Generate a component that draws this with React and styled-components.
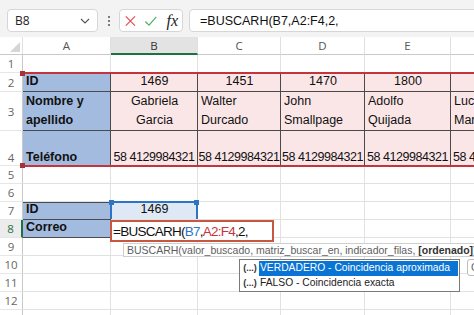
import React from 'react';
import styled, { createGlobalStyle } from 'styled-components';

const GlobalStyle = createGlobalStyle`
  html, body { margin: 0; padding: 0; background: #fff; }
  body { font-family: "Liberation Sans", Arial, sans-serif; }
  * { box-sizing: border-box; }
`;

const Screen = styled.div`
  width: 474px;
  height: 315px;
  overflow: hidden;
  background: #fff;
  display: flex;
  flex-direction: column;
`;

const FormulaBar = styled.div`
  height: 37px;
  flex: none;
  background: #f3f3f3;
  display: flex;
  align-items: flex-start;
  padding: 9px 0 0 7px;
`;

const NameBox = styled.div`
  width: 91px;
  height: 23px;
  background: #fff;
  border: 1px solid #d6d6d6;
  border-radius: 4px;
  display: flex;
  align-items: center;
  justify-content: space-between;
  padding: 0 7px 0 7px;
  font-family: "Open Sans", sans-serif;
  font-size: 12px;
  color: #222;
`;

const Dots = styled.div`
  width: 21px;
  height: 23px;
  display: flex;
  flex-direction: column;
  align-items: center;
  justify-content: center;
  gap: 2px;
  span {
    width: 2px;
    height: 2px;
    background: #555;
    border-radius: 1px;
  }
`;

const IconBox = styled.div`
  width: 64px;
  height: 23px;
  background: #fff;
  border: 1px solid #d6d6d6;
  border-radius: 4px;
  display: flex;
  align-items: center;
  gap: 7px;
  padding: 0 4px 0 4px;
`;

const Fx = styled.span`
  font-family: "Liberation Serif", serif;
  font-style: italic;
  font-size: 16px;
  color: #222;
  margin-left: 2px;
`;

const FormulaInput = styled.div`
  flex: 1;
  height: 23px;
  margin-left: 6px;
  margin-right: -8px;
  background: #fff;
  border: 1px solid #d6d6d6;
  border-radius: 4px;
  display: flex;
  align-items: center;
  padding-left: 10px;
  font-family: "Liberation Sans", sans-serif;
  font-size: 12.5px;
  color: #111;
`;

const Sheet = styled.div`
  display: grid;
  grid-template-columns: 23px 88px 87px 83px 84px 86px 86px 60px;
  grid-template-rows: 18px 18px 19px 39px 35px repeat(9, 18px);
  flex: none;
`;

const Corner = styled.div`
  background: #fff;
  border-right: 1px solid #e0e0e0;
  border-bottom: 1px solid #c9c9c9;
  position: relative;
  svg { position: absolute; right: 2px; bottom: 2px; }
`;

const ColHead = styled.div`
  display: flex;
  align-items: center;
  justify-content: center;
  font-family: "Open Sans", sans-serif;
  font-size: 11.5px;
  color: ${p => (p.$active ? '#333' : '#555')};
  background: ${p => (p.$active ? '#e3e3e3' : '#fff')};
  border-right: 1px solid #e0e0e0;
  border-bottom: ${p => (p.$active ? '2px solid #1e7145' : '1px solid #c9c9c9')};
`;

const RowHead = styled.div`
  display: flex;
  align-items: center;
  justify-content: center;
  font-family: "Open Sans", sans-serif;
  font-size: 11.5px;
  color: ${p => (p.$active ? '#1e7145' : '#666')};
  background: ${p => (p.$active ? '#ececec' : '#fff')};
  border-right: ${p => (p.$active ? '2px solid #1e7145' : '1px solid #c9c9c9')};
  border-bottom: 1px solid #e6e6e6;
  padding-top: ${p => (p.$bottom ? '18px' : '0')};
`;

const fills = {
  blue: '#a3bbdf',
  pink: '#fbe6e7',
  sel: '#dfe8f5',
  none: '#fff',
};

const Cell = styled.div`
  position: relative;
  background: ${p => fills[p.$fill || 'none']};
  border-right: 1px solid ${p => (p.$dark ? '#4a4a4a' : '#e1e1e1')};
  border-bottom: 1px solid ${p => (p.$darkBottom ? '#4a4a4a' : '#e1e1e1')};
  border-top: ${p => (p.$darkTop ? '1px solid #4a4a4a' : 'none')};
  display: flex;
  flex-direction: column;
  justify-content: flex-end;
  align-items: ${p => (p.$center ? 'center' : 'flex-start')};
  text-align: ${p => (p.$center ? 'center' : 'left')};
  padding: 0 ${p => (p.$tight ? '0' : '2px')} 0 ${p => (p.$tight ? '0' : '3px')};
  font-family: "Liberation Sans", sans-serif;
  font-size: 12.5px;
  line-height: ${p => p.$lh || '19px'};
  letter-spacing: ${p => (p.$tight ? '-0.45px' : 'normal')};
  font-weight: ${p => (p.$bold ? 700 : 400)};
  color: #111;
  white-space: nowrap;
`;

/* reference highlights drawn over the cells they belong to */
const RefRange = styled.div`
  position: absolute;
  left: -1px;
  top: -1px;
  width: 470px;
  height: 95px;
  border-top: 2px solid #c3343d;
  border-bottom: 2px solid #c3343d;
  pointer-events: none;
  z-index: 2;
`;

const SelRange = styled.div`
  position: absolute;
  left: -1px;
  top: -1px;
  right: -1px;
  bottom: 0;
  border: 2px solid #2e73c4;
  border-bottom: none;
  pointer-events: none;
  z-index: 2;
`;

const Handle = styled.span`
  position: absolute;
  width: 5px;
  height: 5px;
  background: ${p => p.$color};
  left: ${p => p.$left || 'auto'};
  top: ${p => p.$top || 'auto'};
  bottom: ${p => p.$bottom || 'auto'};
  right: ${p => p.$right || 'auto'};
`;

const EditBox = styled.div`
  position: absolute;
  left: -1px;
  top: 0;
  width: 164px;
  height: 22px;
  background: #fff;
  border: 2px solid #c8573f;
  display: flex;
  align-items: center;
  padding-left: 1px;
  font-family: "Liberation Sans", sans-serif;
  font-size: 13.5px;
  font-weight: 400;
  letter-spacing: -0.75px;
  color: #111;
  z-index: 5;
`;

const Ref = styled.span`
  color: ${p => p.$color};
`;

const ArgTip = styled.div`
  position: absolute;
  left: 12px;
  top: 23px;
  height: 14px;
  padding: 0 3px;
  background: #fff;
  border: 1px solid #cfcfcf;
  display: flex;
  align-items: center;
  font-family: "Liberation Sans", sans-serif;
  font-size: 10.5px;
  line-height: 12px;
  color: #5e5e5e;
  white-space: nowrap;
  z-index: 6;
  b { color: #333; }
`;

const DropList = styled.div`
  position: absolute;
  left: 128px;
  top: 39px;
  width: 221px;
  height: 33px;
  background: #fff;
  border: 1px solid #7a7a7a;
  padding: 1px 1px;
  display: flex;
  flex-direction: column;
  z-index: 7;
`;

const Option = styled.div`
  height: 15px;
  display: flex;
  align-items: center;
  font-family: "Liberation Sans", sans-serif;
  font-size: 10.3px;
  line-height: 12px;
  color: #222;
  white-space: nowrap;
`;

const OptIcon = styled.span`
  width: 18px;
  flex: none;
  font-weight: 700;
  font-size: 9px;
  color: #333;
  text-align: center;
`;

const OptText = styled.span`
  flex: 1;
  height: 100%;
  display: flex;
  align-items: center;
  padding-left: 1px;
  background: ${p => (p.$active ? '#0a74d4' : 'transparent')};
  color: ${p => (p.$active ? '#fff' : '#222')};
`;

const SideTip = styled.div`
  position: absolute;
  left: 356px;
  top: 39px;
  width: 40px;
  height: 17px;
  border: 1px solid #bdbdbd;
  border-radius: 3px;
  background: #fff;
  font-family: "Liberation Sans", sans-serif;
  font-size: 10.5px;
  line-height: 13px;
  color: #666;
  padding: 1px 3px;
  z-index: 7;
`;

const cols = ['A', 'B', 'C', 'D', 'E', 'F', 'G'];

const CloseIcon = () => (
  <svg width="14" height="14" viewBox="0 0 14 14">
    <path d="M2 2 L12 12 M12 2 L2 12" stroke="#e24c52" strokeWidth="1.3" fill="none" />
  </svg>
);

const CheckIcon = () => (
  <svg width="15" height="14" viewBox="0 0 15 14">
    <path d="M1.5 7.5 L5.5 11.5 L13.5 2.5" stroke="#4caf63" strokeWidth="1.3" fill="none" />
  </svg>
);

const Chevron = () => (
  <svg width="10" height="6" viewBox="0 0 10 6">
    <path d="M1 1 L5 5 L9 1" stroke="#555" strokeWidth="1.1" fill="none" />
  </svg>
);

const tableRows = [
  {
    n: 2,
    label: 'ID',
    values: ['1469', '1451', '1470', '1800', '1802'].map(t => ({ t, c: true })),
  },
  {
    n: 3,
    label: ['Nombre y', 'apellido'],
    values: [
      { t: ['Gabriela', 'Garcia'], c: true },
      { t: ['Walter', 'Durcado'] },
      { t: ['John', 'Smallpage'] },
      { t: ['Adolfo', 'Quijada'] },
      { t: ['Lucia', 'Martinez'] },
    ],
  },
  {
    n: 4,
    label: 'Teléfono',
    lh: '16px',
    values: Array.from({ length: 5 }, () => ({ t: '58 4129984321', c: true, tight: true })),
  },
];

const Lines = ({ t }) =>
  Array.isArray(t) ? t.map((line, i) => <span key={i}>{line}</span>) : <span>{t}</span>;

const EmptyRow = ({ n, active }) => (
  <>
    <RowHead $active={active}>{n}</RowHead>
    {cols.map(c => (
      <Cell key={`${n}-${c}`} />
    ))}
  </>
);

export default function App() {
  return (
    <Screen>
      <GlobalStyle />
      <FormulaBar>
        <NameBox>
          <span>B8</span>
          <Chevron />
        </NameBox>
        <Dots>
          <span />
          <span />
          <span />
        </Dots>
        <IconBox>
          <CloseIcon />
          <CheckIcon />
          <Fx>fx</Fx>
        </IconBox>
        <FormulaInput>=BUSCARH(B7,A2:F4,2,</FormulaInput>
      </FormulaBar>

      <Sheet>
        <Corner>
          <svg width="10" height="10" viewBox="0 0 10 10">
            <path d="M10 0 L10 10 L0 10 Z" fill="#d6d6d6" />
          </svg>
        </Corner>
        {cols.map(c => (
          <ColHead key={c} $active={c === 'B'}>
            {c}
          </ColHead>
        ))}

        <EmptyRow n={1} />

        {tableRows.map((row, ri) => (
          <React.Fragment key={row.n}>
            <RowHead $bottom={row.n === 4}>{row.n}</RowHead>
            <Cell $fill="blue" $bold $dark $darkBottom={ri < 2} $lh={row.lh}>
              <Lines t={row.label} />
              {ri === 0 && (
                <RefRange>
                  <Handle $color="#a8303a" $left="-2px" $top="-3px" />
                  <Handle $color="#a8303a" $left="-2px" $bottom="-3px" />
                </RefRange>
              )}
            </Cell>
            {row.values.map((v, i) => (
              <Cell
                key={i}
                $fill="pink"
                $dark
                $darkBottom={ri < 2}
                $center={v.c}
                $tight={v.tight}
                $lh={row.lh}
              >
                <Lines t={v.t} />
              </Cell>
            ))}
            <Cell />
          </React.Fragment>
        ))}

        <EmptyRow n={5} />
        <EmptyRow n={6} />

        <RowHead>7</RowHead>
        <Cell $fill="blue" $bold $dark $darkTop $darkBottom>
          <span>ID</span>
        </Cell>
        <Cell $fill="sel" $center>
          <span>1469</span>
          <SelRange>
            <Handle $color="#2e73c4" $left="-3px" $top="-3px" />
            <Handle $color="#2e73c4" $right="-3px" $top="-3px" />
          </SelRange>
        </Cell>
        {cols.slice(2).map(c => (
          <Cell key={`7-${c}`} />
        ))}

        <RowHead $active>8</RowHead>
        <Cell $fill="blue" $bold $dark $darkBottom>
          <span>Correo</span>
        </Cell>
        <Cell>
          <EditBox>
            =BUSCARH(<Ref $color="#2e73c4">B7</Ref>,<Ref $color="#c3343d">A2:F4</Ref>,2,
          </EditBox>
          <ArgTip>
            BUSCARH(valor_buscado, matriz_buscar_en, indicador_filas,&nbsp;<b>[ordenado]</b>)
          </ArgTip>
          <DropList>
            <Option>
              <OptIcon>(...)</OptIcon>
              <OptText $active>VERDADERO - Coincidencia aproximada</OptText>
            </Option>
            <Option>
              <OptIcon>(...)</OptIcon>
              <OptText>FALSO - Coincidencia exacta</OptText>
            </Option>
          </DropList>
          <SideTip>Co</SideTip>
        </Cell>
        {cols.slice(2).map(c => (
          <Cell key={`8-${c}`} />
        ))}

        {[9, 10, 11, 12, 13].map(n => (
          <EmptyRow key={n} n={n} />
        ))}
      </Sheet>
    </Screen>
  );
}
